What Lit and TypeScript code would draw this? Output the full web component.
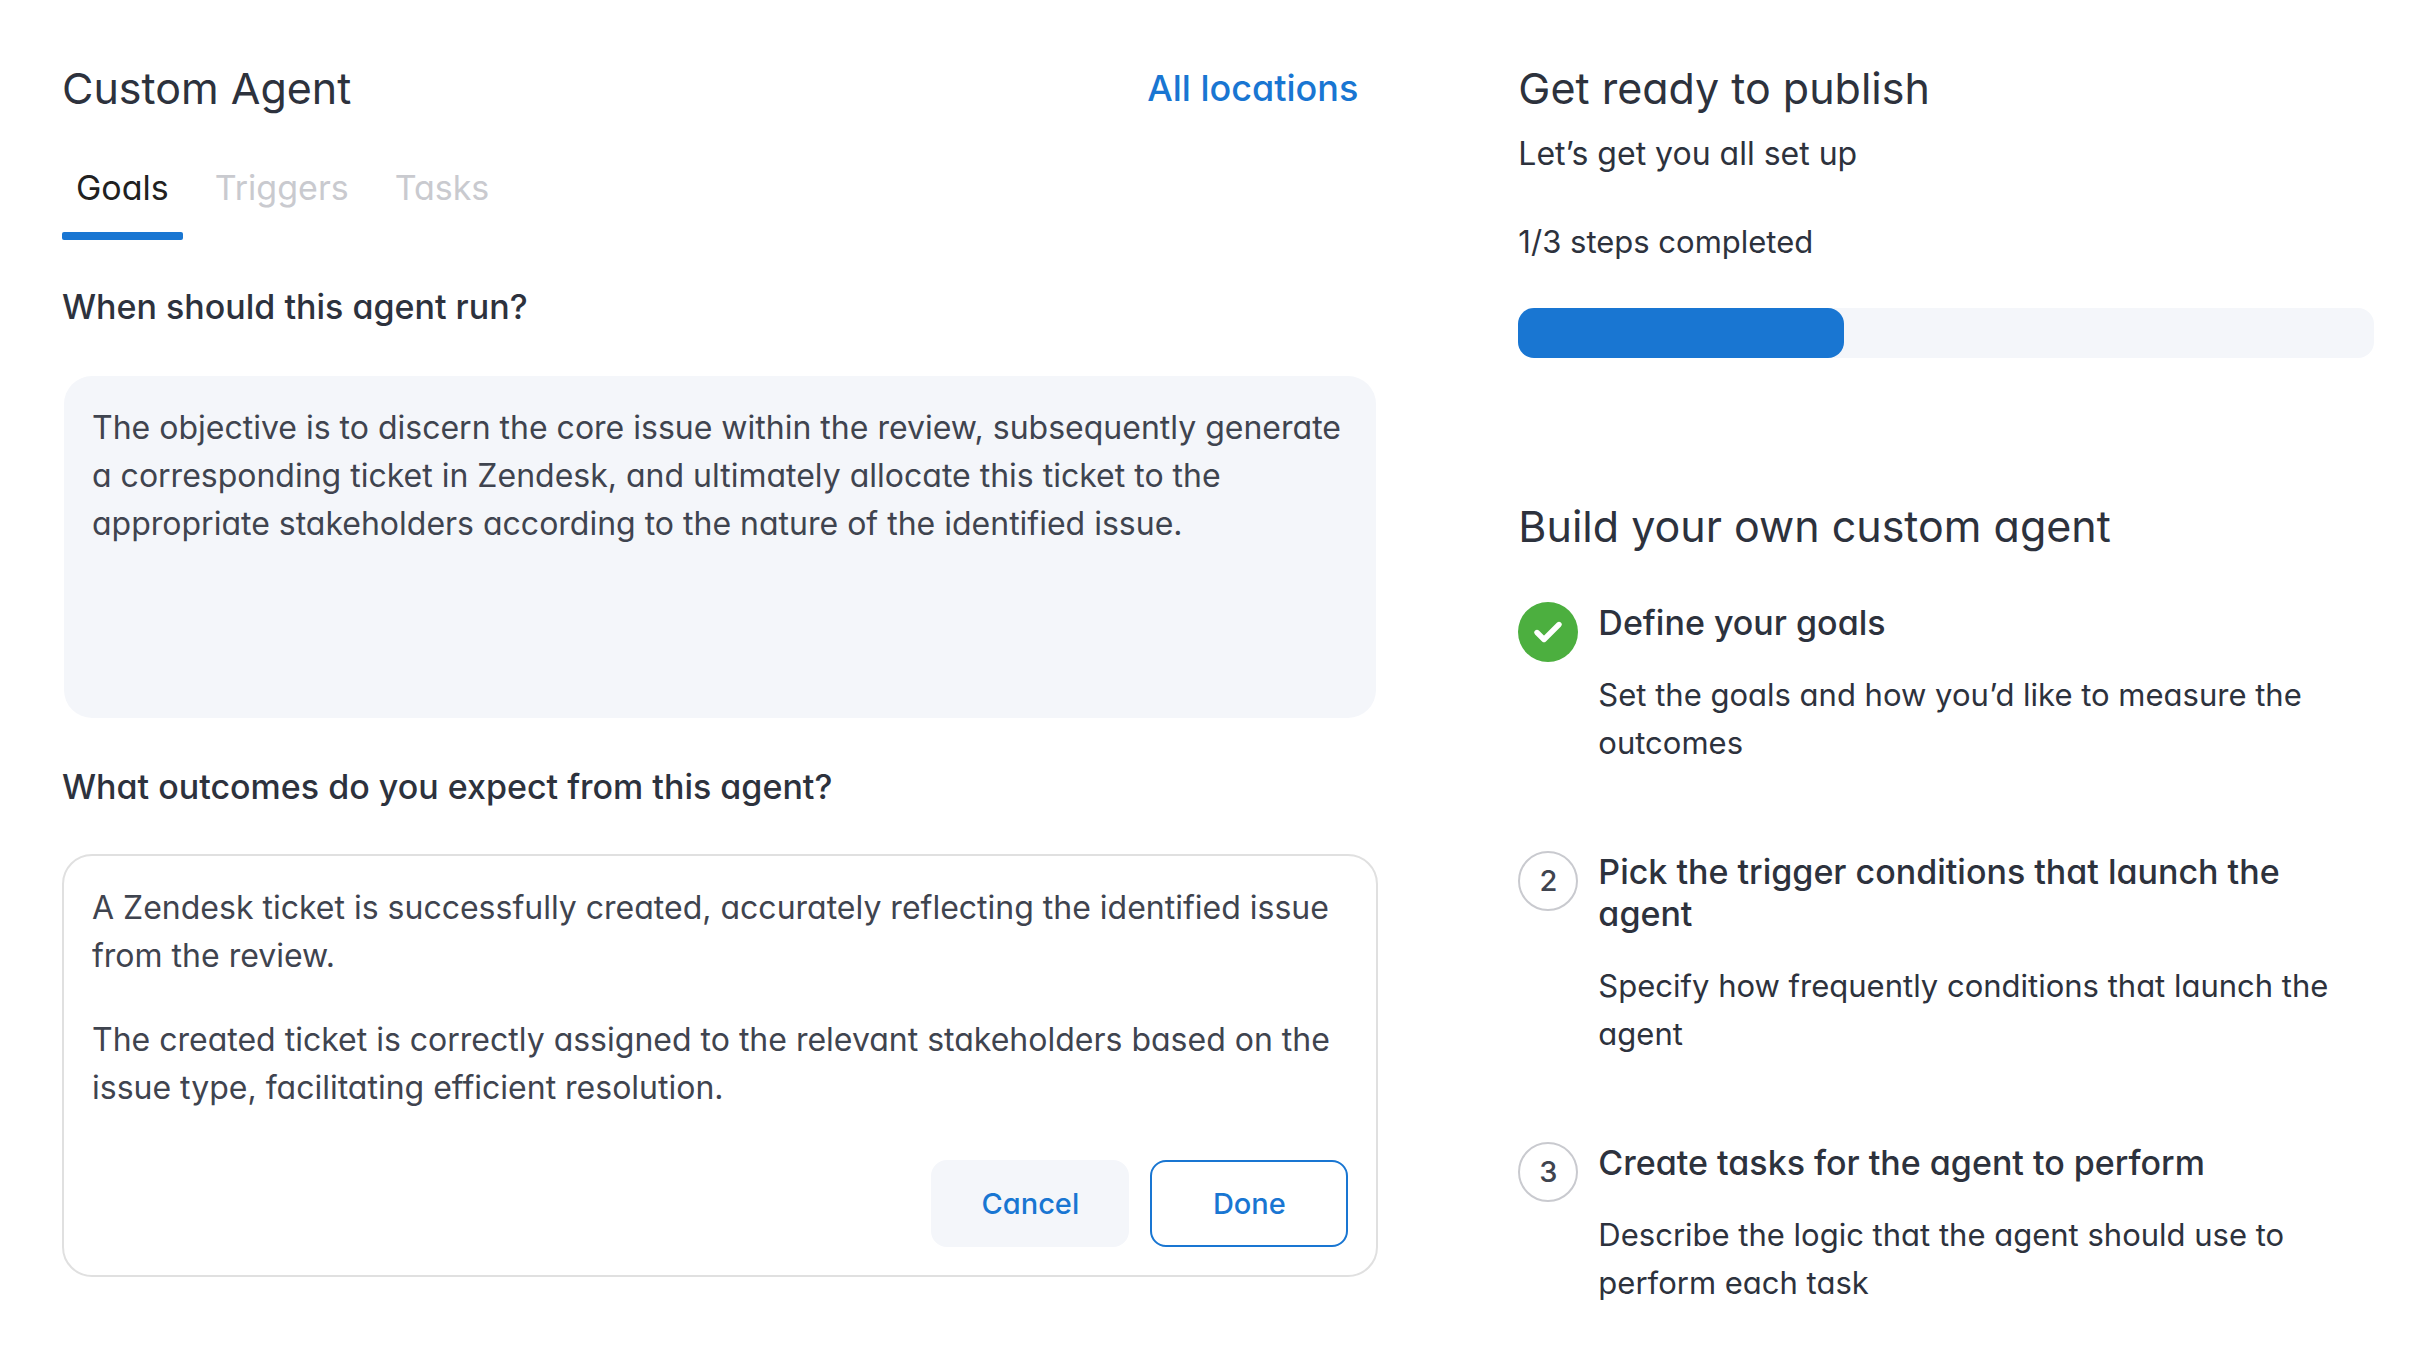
import { LitElement, html, css, nothing } from "lit";
import { customElement, property, state } from "lit/decorators.js";
import { classMap } from "lit/directives/class-map.js";

interface Step {
  title: string;
  description: string;
  done: boolean;
}

const TABS = ["Goals", "Triggers", "Tasks"];

const OBJECTIVE =
  "The objective is to discern the core issue within the review, subsequently generate a corresponding ticket in Zendesk, and ultimately allocate this ticket to the appropriate stakeholders according to the nature of the identified issue.";

const OUTCOMES = [
  "A Zendesk ticket is successfully created, accurately reflecting the identified issue from the review.",
  "The created ticket is correctly assigned to the relevant stakeholders based on the issue type, facilitating efficient resolution.",
];

const STEPS: Step[] = [
  {
    title: "Define your goals",
    description: "Set the goals and how you’d like to measure the outcomes",
    done: true,
  },
  {
    title: "Pick the trigger conditions that launch the agent",
    description: "Specify how frequently conditions that launch the agent",
    done: false,
  },
  {
    title: "Create tasks for the agent to perform",
    description: "Describe the logic that the agent should use to perform each task",
    done: false,
  },
];

const base = css`
  :host {
    display: block;
    color: #2d323d;
    font-family: Inter, "Liberation Sans", sans-serif;
    font-size: 31px;
    line-height: 48px;
    font-feature-settings: "cv11";
  }
  *,
  *::before,
  *::after {
    box-sizing: border-box;
  }
  h1,
  h2,
  h3,
  p,
  ol {
    margin: 0;
    padding: 0;
  }
  button,
  textarea {
    font: inherit;
    font-feature-settings: inherit;
    color: inherit;
  }
  .title {
    font-size: 43px;
    line-height: 56px;
    font-weight: 400;
  }
`;

@customElement("agent-editor")
export class AgentEditor extends LitElement {
  @state() private tab = "Goals";

  static styles = [
    base,
    css`
      .header {
        display: flex;
        align-items: center;
        justify-content: space-between;
        padding-right: 20px;
      }
      .locations {
        font-size: 36px;
        font-weight: 500;
        color: #1976d2;
        text-decoration: none;
      }
      .tabs {
        display: flex;
        gap: 18px;
        margin-top: 48px;
      }
      .tab {
        padding: 0 14px 20px;
        border: 0;
        background: none;
        font-size: 34px;
        color: #c9cacf;
        cursor: pointer;
      }
      .tab::after {
        content: "";
        display: block;
        height: 8px;
        margin: 20px -14px -20px;
        border-radius: 2px;
      }
      .tab.active {
        color: #212121;
      }
      .tab.active::after {
        background: #1976d2;
      }
      .panel {
        display: flex;
        flex-direction: column;
        margin-top: 43px;
      }
      .label {
        margin-bottom: 43px;
        font-size: 34px;
        font-weight: 500;
      }
      .field {
        display: block;
        width: 100%;
        border: 2px solid transparent;
        border-radius: 30px;
        padding: 28px 28px 26px;
        color: #3f444f;
        font-size: 32px;
        resize: none;
        outline: none;
      }
      .filled {
        margin-bottom: 43px;
        background: #f4f6fa;
        background-clip: padding-box;
      }
      .outlined {
        display: flex;
        flex-direction: column;
        gap: 36px;
        border-color: #e0e0e0;
        padding-bottom: 28px;
      }
      .outcome {
        display: block;
        width: 100%;
        border: 0;
        padding: 0;
        background: none;
        resize: none;
        outline: none;
        overflow: hidden;
      }
      .actions {
        display: flex;
        justify-content: flex-end;
        gap: 21px;
        margin-top: 12px;
      }
      .action {
        width: 198px;
        height: 87px;
        border: 2px solid #f4f6fa;
        border-radius: 16px;
        background: #f4f6fa;
        color: #1976d2;
        font-size: 29px;
        font-weight: 500;
        cursor: pointer;
      }
      .action.primary {
        border-color: #1976d2;
        background: #fff;
      }
    `,
  ];

  render() {
    return html`
      <header class="header">
        <h1 class="title">Custom Agent</h1>
        <a class="locations" href="#locations">All locations</a>
      </header>
      <div class="tabs" role="tablist">
        ${TABS.map(
          (name) => html`<button
            type="button"
            role="tab"
            aria-selected=${name === this.tab ? "true" : "false"}
            class=${classMap({ tab: true, active: name === this.tab })}
            @click=${() => (this.tab = name)}
          >${name}</button>`
        )}
      </div>
      <form class="panel" @submit=${(e: Event) => e.preventDefault()}>
        <label class="label" for="objective">When should this agent run?</label>
        <textarea class="field filled" id="objective" rows="6" spellcheck="false" .value=${OBJECTIVE}></textarea>
        <label class="label" for="outcome-0">What outcomes do you expect from this agent?</label>
        <div class="field outlined">
          ${OUTCOMES.map(
            (text, i) => html`<textarea
              class="outcome"
              id="outcome-${i}"
              rows="2"
              spellcheck="false"
              aria-label=${i ? `Outcome ${i + 1}` : nothing}
              .value=${text}
            ></textarea>`
          )}
          <div class="actions">
            <button class="action" type="button">Cancel</button>
            <button class="action primary" type="submit">Done</button>
          </div>
        </div>
      </form>
    `;
  }
}

@customElement("publish-step")
export class PublishStep extends LitElement {
  @property({ attribute: false }) step!: Step;
  @property({ type: Number }) number = 1;

  static styles = [
    base,
    css`
      .step {
        display: flex;
        gap: 20px;
      }
      .marker {
        flex: none;
        display: flex;
        align-items: center;
        justify-content: center;
        width: 60px;
        height: 60px;
        border: 2px solid #c9cacf;
        border-radius: 50%;
        color: #3f444f;
        font-size: 29px;
        font-weight: 500;
      }
      .check {
        flex: none;
        display: block;
        width: 60px;
        height: 60px;
      }
      .text {
        display: flex;
        flex-direction: column;
        gap: 27px;
      }
      .name {
        font-size: 34px;
        line-height: 42px;
        font-weight: 500;
      }
    `,
  ];

  render() {
    const { title, description, done } = this.step;
    return html`
      <div class="step">
        ${done
          ? html`<svg class="check" viewBox="0 0 60 60" role="img" aria-label="Completed">
              <circle cx="30" cy="30" r="30" fill="#4caf3f" />
              <path
                d="M19 30.5 L26 37.5 L41 22.5"
                fill="none"
                stroke="#fff"
                stroke-width="5.4"
                stroke-linecap="round"
                stroke-linejoin="round"
              />
            </svg>`
          : html`<span class="marker">${this.number}</span>`}
        <div class="text">
          <h3 class="name">${title}</h3>
          <p>${description}</p>
        </div>
      </div>
    `;
  }
}

@customElement("publish-guide")
export class PublishGuide extends LitElement {
  static styles = [
    base,
    css`
      .subtitle {
        margin-top: 14px;
        font-size: 32px;
      }
      .count {
        margin-top: 40px;
      }
      .track {
        height: 50px;
        margin-top: 42px;
        border-radius: 16px;
        background: #f4f6fa;
      }
      .fill {
        height: 100%;
        border-radius: 16px;
        background: #1976d2;
      }
      .build {
        margin-top: 140px;
      }
      .steps {
        display: flex;
        flex-direction: column;
        gap: 84px;
        margin-top: 48px;
        list-style: none;
      }
    `,
  ];

  render() {
    const done = STEPS.filter((s) => s.done).length;
    return html`
      <h2 class="title">Get ready to publish</h2>
      <p class="subtitle">Let’s get you all set up</p>
      <p class="count" id="count">${done}/${STEPS.length} steps completed</p>
      <div
        class="track"
        role="progressbar"
        aria-labelledby="count"
        aria-valuemin="0"
        aria-valuemax=${STEPS.length}
        aria-valuenow=${done}
      >
        <div class="fill" style="width: 38%"></div>
      </div>
      <h2 class="title build">Build your own custom agent</h2>
      <ol class="steps">
        ${STEPS.map((step, i) => html`<li><publish-step .step=${step} .number=${i + 1}></publish-step></li>`)}
      </ol>
    `;
  }
}

@customElement("app-root")
export class AppRoot extends LitElement {
  static styles = [
    base,
    css`
      :host {
        min-height: 100vh;
        background: #fff;
      }
      .page {
        display: grid;
        grid-template-columns: minmax(0, 20fr) minmax(0, 13fr);
        gap: 140px;
        padding: 60px 62px;
      }
    `,
  ];

  render() {
    return html`
      <main class="page">
        <agent-editor></agent-editor>
        <publish-guide></publish-guide>
      </main>
    `;
  }
}
